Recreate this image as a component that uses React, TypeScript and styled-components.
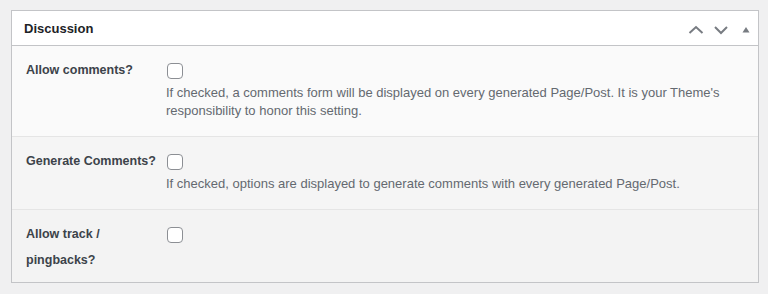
import styled, { createGlobalStyle } from "styled-components";

const GlobalStyle = createGlobalStyle`
    body {
        margin: 0;
        background: #f0f0f1;
        font-family: "Liberation Sans", Arial, sans-serif;
        -webkit-font-smoothing: antialiased;
    }
`;

const Page = styled.div`
    padding: 10px 9px 11px 11px;
`;

const Panel = styled.section`
    border: 1px solid #c3c4c7;
    background: #fff;
`;

const Header = styled.header`
    display: flex;
    align-items: center;
    height: 34px;
    border-bottom: 1px solid #c3c4c7;
    padding-left: 12px;
`;

const Title = styled.h2`
    flex: 1;
    margin: 0;
    font-size: 13px;
    font-weight: 700;
    color: #1d2327;
    line-height: 15px;
`;

const Handle = styled.button`
    all: unset;
    width: 25px;
    height: 34px;
    display: flex;
    align-items: center;
    justify-content: center;
    color: #787c82;
    cursor: pointer;
    svg {
        margin-top: 3px;
    }
`;

const Row = styled.div<{ $tone: string }>`
    display: grid;
    grid-template-columns: 140px 1fr;
    padding: 11px 14px 0;
    background: ${(p) => p.$tone};
    &:not(:last-child) {
        border-bottom: 1px solid #e5e5e5;
    }
`;

const Label = styled.label`
    font-size: 12.5px;
    font-weight: 700;
    line-height: 26px;
    color: #3c434a;
    padding-bottom: 9px;
`;

const Field = styled.div`
    display: flex;
    flex-direction: column;
    align-items: flex-start;
    padding-bottom: 16px;
`;

const Checkbox = styled.input.attrs({ type: "checkbox" })`
    appearance: none;
    margin: 6px 0 0 1px;
    width: 16px;
    height: 16px;
    box-sizing: border-box;
    border: 1px solid #8c8f94;
    border-radius: 4px;
    background: #fff;
`;

const Description = styled.p`
    margin: 5px 0 0;
    font-size: 13px;
    line-height: 18px;
    color: #646970;
`;

const options = [
    {
        id: "allow-comments",
        label: "Allow comments?",
        tone: "#fafafa",
        text: "If checked, a comments form will be displayed on every generated Page/Post. It is your Theme's responsibility to honor this setting.",
    },
    {
        id: "generate-comments",
        label: "Generate Comments?",
        tone: "#f5f5f5",
        text: "If checked, options are displayed to generate comments with every generated Page/Post.",
    },
    {
        id: "allow-pings",
        label: "Allow track / pingbacks?",
        tone: "#f3f3f3",
        text: "",
    },
];

function App() {
    return (
        <Page>
            <GlobalStyle />
            <Panel>
                <Header>
                    <Title>Discussion</Title>
                    <Handle aria-label="Move up">
                        <svg width="16" height="10" viewBox="0 0 16 10">
                            <polyline points="1.5,8 8,2 14.5,8" fill="none" stroke="currentColor" strokeWidth="2" />
                        </svg>
                    </Handle>
                    <Handle aria-label="Move down">
                        <svg width="16" height="10" viewBox="0 0 16 10">
                            <polyline points="2,2 8,8 14,2" fill="none" stroke="currentColor" strokeWidth="2" />
                        </svg>
                    </Handle>
                    <Handle aria-label="Toggle panel">
                        <svg width="10" height="8" viewBox="0 0 10 8">
                            <polygon points="1.5,6.5 5,1 8.5,6.5" fill="currentColor" />
                        </svg>
                    </Handle>
                </Header>
                {options.map((item) => (
                    <Row key={item.id} $tone={item.tone}>
                        <Label htmlFor={item.id}>
                            {item.id === "allow-pings" ? <>Allow track /<br />pingbacks?</> : item.label}
                        </Label>
                        <Field>
                            <Checkbox id={item.id} />
                            {item.text ? <Description>{item.text}</Description> : null}
                        </Field>
                    </Row>
                ))}
            </Panel>
        </Page>
    );
}

export default App;
